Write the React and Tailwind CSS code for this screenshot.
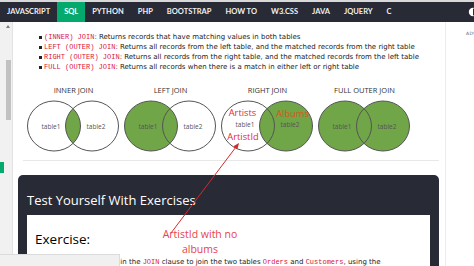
import React from 'react';

const navItems = ['JAVASCRIPT', 'SQL', 'PYTHON', 'PHP', 'BOOTSTRAP', 'HOW TO', 'W3.CSS', 'JAVA', 'JQUERY', 'C'];

const joins = [
  { code: '(INNER) JOIN', text: ': Returns records that have matching values in both tables' },
  { code: 'LEFT (OUTER) JOIN', text: ': Returns all records from the left table, and the matched records from the right table' },
  { code: 'RIGHT (OUTER) JOIN', text: ': Returns all records from the right table, and the matched records from the left table' },
  { code: 'FULL (OUTER) JOIN', text: ': Returns all records when there is a match in either left or right table' },
];

const GREEN = '#70a548';
const LX = 29;
const RX = 67;
const CY = 26;

// one venn picture, mode decides which parts are green
const Venn = ({ id, mode, labelY = CY, children }) => (
  <svg width="97" height="52" viewBox="0 0 97 52">
    <defs>
      <clipPath id={`clip-${id}`}>
        <ellipse cx={LX} cy={CY} rx="26.5" ry="25" />
      </clipPath>
    </defs>
    {(mode === 'left' || mode === 'full') && <ellipse cx={LX} cy={CY} rx="26.5" ry="25" fill={GREEN} />}
    {(mode === 'right' || mode === 'full') && <ellipse cx={RX} cy={CY} rx="26.5" ry="25" fill={GREEN} />}
    {mode === 'inner' && (
      <ellipse cx={RX} cy={CY} rx="26.5" ry="25" fill={GREEN} clipPath={`url(#clip-${id})`} />
    )}
    <ellipse cx={LX} cy={CY} rx="26.5" ry="25" fill="none" stroke="#555" strokeWidth="1" />
    <ellipse cx={RX} cy={CY} rx="26.5" ry="25" fill="none" stroke="#555" strokeWidth="1" />
    <g fontFamily="'Open Sans', sans-serif" fontSize="6.5" fill="#555" textAnchor="middle" dominantBaseline="central">
      <text x="26" y={labelY}>table1</text>
      <text x="71" y={labelY}>table2</text>
    </g>
    {children}
  </svg>
);

const Code = ({ children }) => (
  <span className="text-[#dc143c] text-[7px] [font-family:'Liberation_Mono',monospace]">{children}</span>
);

export default function App() {
  return (
    <div className="relative w-[474px] h-[266px] overflow-hidden bg-white [font-family:'DejaVu_Sans',sans-serif]">
      <div className="h-[2px] bg-[#d9d9d9]" />
      <nav className="h-[20px] bg-[#282a35] flex items-stretch">
        {navItems.map((item) => (
          <div
            key={item}
            className={`px-[7px] flex items-center text-[7.5px] font-bold [font-family:Lato,sans-serif] ${
              item === 'SQL' ? 'bg-[#04aa6d] text-white' : 'text-[#f0f0f0]'
            }`}
          >
            {item}
          </div>
        ))}
        <div className="ml-auto flex items-center">
          <svg width="6" height="10" viewBox="0 0 6 10">
            <circle cx="5" cy="5" r="4.2" fill="#fff" />
            <path d="M5 1.6 A3.4 3.4 0 0 1 5 8.4 Z" fill="#282a35" />
          </svg>
        </div>
      </nav>

      <div className="flex h-[244px]">
        {/* left menu edge + scrollbar */}
        <aside className="w-[13px] flex bg-[#f1f1f1] border-r border-[#e3e3e3]">
          <div className="w-[4px] pt-[140px]">
            <div className="h-[11px] bg-[#04aa6d]" />
          </div>
          <div className="w-[8px] flex flex-col items-center">
            <div className="mt-[3px] w-0 h-0 border-l-[2px] border-r-[2px] border-b-[3px] border-l-transparent border-r-transparent border-b-[#7a7a7a]" />
            <div className="mt-[32px] w-[5px] h-[60px] bg-[#c1c1c1]" />
          </div>
        </aside>

        <main className="w-[432px] pt-[10px]">
          <ul className="pl-[26px] text-[7px] text-[#222] leading-[10px]">
            {joins.map((j) => (
              <li key={j.code} className="flex items-center h-[10px] whitespace-nowrap">
                <span className="w-[3px] h-[3px] bg-[#222] mr-[2px] shrink-0" />
                <Code>{j.code}</Code>
                <span>{j.text}</span>
              </li>
            ))}
          </ul>

          <div className="flex ml-[12px] mt-[13px]">
            {[
              { title: 'INNER JOIN', mode: 'inner' },
              { title: 'LEFT JOIN', mode: 'left' },
              { title: 'RIGHT JOIN', mode: 'right' },
              { title: 'FULL OUTER JOIN', mode: 'full' },
            ].map((v) => (
              <div key={v.title} className="w-[97px] flex flex-col items-center">
                <div className="h-[10px] leading-[10px] text-[7.5px] text-[#333] [font-family:'Open_Sans',sans-serif]">
                  {v.title}
                </div>
                <div className="mt-[5px]">
                  <Venn id={v.mode} mode={v.mode} labelY={v.mode === 'right' ? 24 : CY}>
                    {v.mode === 'right' && (
                      <g fontFamily="'Open Sans', sans-serif" fontSize="9.3" textAnchor="middle" dominantBaseline="central">
                        <text x="23.5" y="12.5" fill="#e8262f">Artists</text>
                        <text x="24" y="36" fill="#e8262f">ArtistId</text>
                        <text x="73.5" y="13" fill="#d9541e">Albums</text>
                      </g>
                    )}
                  </Venn>
                </div>
              </div>
            ))}
          </div>

          <div className="ml-[10px] mt-[8px] w-[416px] h-[1px] bg-[#e8e8e8]" />

          <section className="ml-[5px] mt-[14px] w-[421px] h-[100px] bg-[#282a35] rounded-[5px] pt-[16px] px-[9px]">
            <h2 className="text-white text-[13px] leading-[18px] [font-family:'Open_Sans',sans-serif]">
              Test Yourself With Exercises
            </h2>
            <div className="mt-[6px] bg-white h-[60px] pt-[15px] pl-[8px]">
              <h3 className="text-black text-[13.5px] leading-[18px] [font-family:'Open_Sans',sans-serif]">Exercise:</h3>
              <p className="mt-[9px] text-[7px] leading-[10px] text-[#222] whitespace-nowrap">
                Insert the missing parts in the <Code>JOIN</Code> clause to join the two tables <Code>Orders</Code> and{' '}
                <Code>Customers</Code>, using the
              </p>
            </div>
          </section>
        </main>

        <div className="w-[29px] border-l border-[#ececec] pt-[9px] pl-[20px] overflow-hidden">
          <div className="text-[4.5px] text-[#666] tracking-[0.3px] whitespace-nowrap">ADVERTISEMENT</div>
        </div>
      </div>

      {/* annotations drawn over the page */}
      <svg className="absolute inset-0 pointer-events-none" width="474" height="266">
        <line x1="171" y1="233" x2="237.5" y2="145" stroke="#d42a2a" strokeWidth="1" />
        <polygon points="239,143 237.4,149.3 233.4,146.3" fill="#d42a2a" />
      </svg>
      <div className="absolute left-[150px] top-[227px] w-[100px] text-center text-[10.5px] leading-[15px] text-[#e8434b] [font-family:'Open_Sans',sans-serif]">
        ArtistId with no
        <br />
        albums
      </div>

      {/* status bar overlay */}
      <div className="absolute left-0 bottom-0 w-[120px] h-[12px] bg-[#f0f0f0] border-t border-r border-[#dcdcdc]" />
    </div>
  );
}
